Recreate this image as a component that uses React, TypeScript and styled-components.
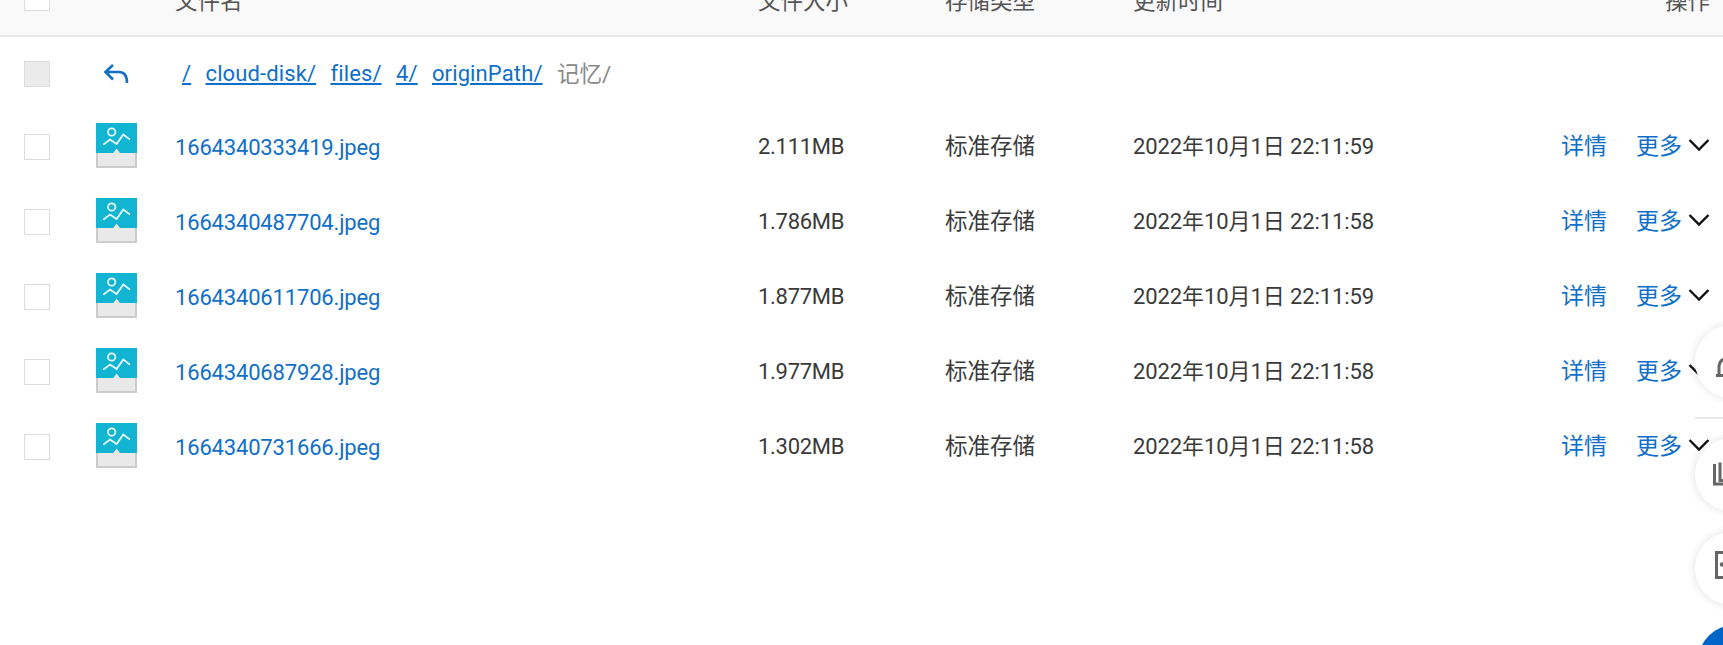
import React from 'react';
import styled, { createGlobalStyle } from 'styled-components';

const files = [
   { name: '1664340333419.jpeg', size: '2.111MB', time: '2022年10月1日 22:11:59' },
   { name: '1664340487704.jpeg', size: '1.786MB', time: '2022年10月1日 22:11:58' },
   { name: '1664340611706.jpeg', size: '1.877MB', time: '2022年10月1日 22:11:59' },
   { name: '1664340687928.jpeg', size: '1.977MB', time: '2022年10月1日 22:11:58' },
   { name: '1664340731666.jpeg', size: '1.302MB', time: '2022年10月1日 22:11:58' },
];

const crumbs = ['/', 'cloud-disk/', 'files/', '4/', 'originPath/'];

function ImageIcon() {
   return (
      <svg width='41' height='45' viewBox='0 0 41 45'>
         <rect width='41' height='45' fill='#cccccc' />
         <rect x='2' y='30' width='37' height='13' fill='#e9e9e9' />
         <rect width='41' height='30' fill='#11b5d1' />
         <path d='M17.3 30l3.3-4.4 3.4 4.4z' fill='#e9e9e9' />
         <circle cx='15.7' cy='9' r='3.7' fill='none' stroke='#f0fbfd' strokeWidth='1.7' />
         <path
            d='M7.3 21.6l6.7-5 6.6 4.4 6.7-9.4 6.7 5'
            fill='none'
            stroke='#f0fbfd'
            strokeWidth='1.8'
         />
      </svg>
   );
}

function App() {
   return (
      <>
         <GlobalStyle />
         <Page>
            <HeaderRow>
               <Check />
               <span />
               <HeaderCell>文件名</HeaderCell>
               <HeaderCell>文件大小</HeaderCell>
               <HeaderCell>存储类型</HeaderCell>
               <HeaderCell>更新时间</HeaderCell>
               <HeaderAction>操作</HeaderAction>
            </HeaderRow>
            <ParentRow>
               <Check $disabled />
               <BackCell>
                  <svg width='30' height='26' viewBox='0 0 30 26'>
                     <path
                        d='M11 4L3.5 11l7.5 7.5M3.5 11H17c5 0 8 3 8 11'
                        fill='none'
                        stroke='#0f6fc9'
                        strokeWidth='2.6'
                     />
                  </svg>
               </BackCell>
               <Crumbs>
                  {crumbs.map((c) => (
                     <Crumb key={c}>{c}</Crumb>
                  ))}
                  <CrumbCurrent>记忆/</CrumbCurrent>
               </Crumbs>
            </ParentRow>
            {files.map((f) => (
               <Row key={f.name}>
                  <FileCheck />
                  <IconCell>
                     <ImageIcon />
                  </IconCell>
                  <FileName>{f.name}</FileName>
                  <SizeCell>{f.size}</SizeCell>
                  <TypeCell>标准存储</TypeCell>
                  <TimeCell>{f.time}</TimeCell>
                  <Actions>
                     <ActionLink>详情</ActionLink>
                     <More>
                        <ActionLink>更多</ActionLink>
                        <Chevron width='22' height='14' viewBox='0 0 22 14'>
                           <path
                              d='M1.5 2L11 11.5 20.5 2'
                              fill='none'
                              stroke='#111'
                              strokeWidth='2.4'
                           />
                        </Chevron>
                     </More>
                  </Actions>
               </Row>
            ))}
         </Page>
         <FloatDock>
            <FloatButton>
               <svg width='30' height='40' viewBox='0 0 30 40'>
                  <path
                     d='M3 33.5H30M6 32V24Q7 17 13 17H30'
                     fill='none'
                     stroke='#666'
                     strokeWidth='3'
                  />
               </svg>
            </FloatButton>
            <DockDivider />
            <FloatButton>
               <svg width='30' height='40' viewBox='0 0 30 40'>
                  <path
                     d='M1.5 9V29H30M7 7.5V25.5H30M12 7.5H30'
                     fill='none'
                     stroke='#666'
                     strokeWidth='3'
                  />
               </svg>
            </FloatButton>
            <FloatButton $gap>
               <svg width='30' height='40' viewBox='0 0 30 40'>
                  <path d='M30 3.5H3.5V28.5H30' fill='none' stroke='#666' strokeWidth='3' />
                  <circle cx='9' cy='15.5' r='2.2' fill='#666' />
               </svg>
            </FloatButton>
         </FloatDock>
         <HelpButton />
      </>
   );
}

const GlobalStyle = createGlobalStyle`
   html, body {
      margin: 0;
      height: 100%;
      overflow: hidden;
      background: #fff;
   }
   body {
      font-family: Roboto, 'Noto Sans CJK SC', sans-serif;
      font-size: 22px;
      line-height: 30px;
      color: #3a3a3a;
   }
`;

const Page = styled.div`
   margin-top: -40px;
`;

const HeaderRow = styled.div`
   display: grid;
   grid-template-columns: 72px 79px 583px 187px 188px 1fr auto;
   align-items: center;
   height: 75px;
   padding: 0 13px 0 24px;
   background: #f9f9f9;
   border-bottom: 2px solid #e8e8e8;
`;

const HeaderCell = styled.span`
   color: #555;
   font-size: 22.5px;
   padding-top: 7px;
`;

const HeaderAction = styled(HeaderCell)`
   text-align: right;
`;

const Row = styled.div`
   display: grid;
   grid-template-columns: 72px 79px 583px 187px 188px 1fr auto;
   align-items: center;
   height: 75px;
   padding: 0 13px 0 24px;
`;

const ParentRow = styled(Row)`
   height: 73px;
`;

const Check = styled.span<{ $disabled?: boolean }>`
   display: block;
   width: 26px;
   height: 26px;
   box-sizing: border-box;
   border: 1px solid #dcdcdc;
   background: ${(p) => (p.$disabled ? '#ebebeb' : '#fff')};
`;

const FileCheck = styled(Check)`
   margin-bottom: 2px;
`;

const IconCell = styled.div`
   display: flex;
   padding-bottom: 4px;
`;

const BackCell = styled.div`
   display: flex;
   padding-left: 6px;
`;

const SizeCell = styled.span`
   letter-spacing: -0.3px;
   padding-bottom: 2px;
`;

const TypeCell = styled.span`
   font-size: 22.5px;
   padding-bottom: 3px;
`;

const TimeCell = styled.span`
   letter-spacing: -0.1px;
   padding-bottom: 2px;
`;

const FileName = styled.a`
   color: #0f6fc9;
   letter-spacing: -0.17px;
`;

const Crumbs = styled.div`
   grid-column: 3 / -1;
   display: flex;
   gap: 14.3px;
   padding-left: 7px;
`;

const Crumb = styled.a`
   color: #0f6fc9;
   text-decoration: underline;
   letter-spacing: 0.12px;
`;

const CrumbCurrent = styled.span`
   color: #888;
   font-size: 22.5px;
`;

const Actions = styled.div`
   display: flex;
   align-items: center;
   gap: 29px;
   padding-bottom: 2px;
`;

const ActionLink = styled.a`
   color: #0f6fc9;
   font-size: 23px;
`;

const More = styled.div`
   display: flex;
   align-items: center;
   gap: 6px;
`;

const Chevron = styled.svg`
   margin-bottom: 3px;
`;

const FloatDock = styled.div`
   position: fixed;
   top: 325px;
   left: 1695px;
   width: 73px;
   display: flex;
   flex-direction: column;
`;

const FloatButton = styled.div<{ $gap?: boolean }>`
   width: 73px;
   height: 73px;
   margin-top: ${(p) => (p.$gap ? '21px' : '0')};
   border-radius: 50%;
   background: #fff;
   box-shadow: 0 0 10px rgba(0, 0, 0, 0.12);
   display: flex;
   align-items: center;
   padding-left: 18px;
   box-sizing: border-box;
`;

const DockDivider = styled.div`
   height: 2px;
   margin: 19px 0;
   background: #e8e8e8;
`;

const HelpButton = styled.div`
   position: fixed;
   top: 625px;
   left: 1698px;
   width: 73px;
   height: 73px;
   border-radius: 50%;
   background: #0064c8;
`;

export default App;
